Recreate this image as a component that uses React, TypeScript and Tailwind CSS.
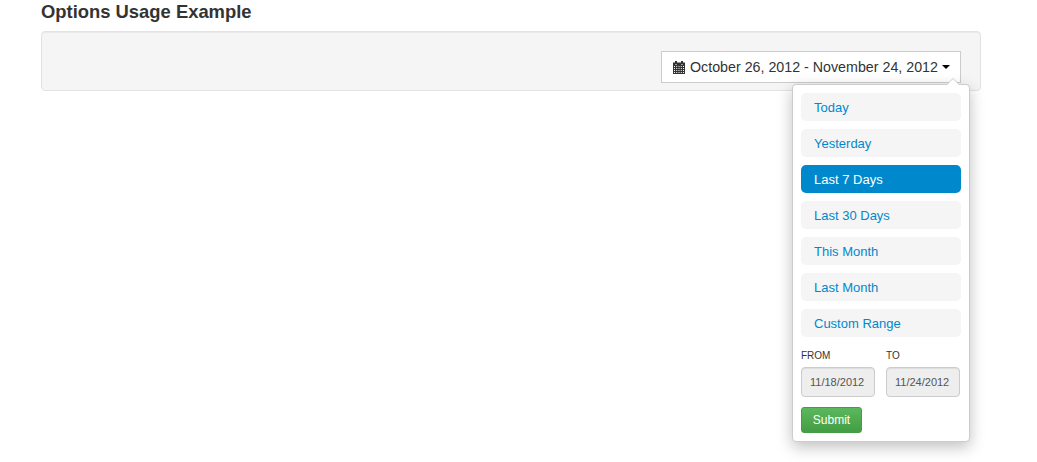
import React from 'react';

const ranges = ['Today', 'Yesterday', 'Last 7 Days', 'Last 30 Days', 'This Month', 'Last Month', 'Custom Range'];

const CalendarIcon = () => (
  <svg width="12" height="13" viewBox="0 0 12 13" className="shrink-0" fill="#333">
    <rect x="2" y="0" width="2" height="3" />
    <rect x="8" y="0" width="2" height="3" />
    <path d="M0 1.500h2v2h2v-2h4v2h2v-2h2V13H0z" />
    <g fill="#f5f5f5">
      {[5, 7, 9, 11].map((y) =>
        [1, 3.2, 5.5, 7.8, 10].map((x) => <rect key={`${x}-${y}`} x={x} y={y} width="1" height="1" />)
      )}
    </g>
  </svg>
);

const DateField = ({ label, value, className }: { label: string; value: string; className?: string }) => (
  <div className={className}>
    <div className="pt-px text-[10px] leading-[18px] text-[#333]">{label}</div>
    <div className="mt-[2px] flex h-[30px] w-[74px] items-center rounded-[4px] border border-[#ccc] bg-[#eee] pl-[8px] text-[11px] text-[#555] shadow-[inset_0_1px_1px_rgba(0,0,0,0.075)]">
      {value}
    </div>
  </div>
);

export default function App() {
  return (
    <div className="h-[462px] w-[1037px] overflow-hidden bg-white pl-[41px] font-['Liberation_Sans',Arial,sans-serif] text-[#333]">
      <h4 className="h-[31px] pt-px text-[18.4px] font-bold leading-[22px]">Options Usage Example</h4>
      <div className="relative flex h-[60px] w-[940px] justify-end rounded-[4px] border border-[#e3e3e3] bg-[#f5f5f5] pr-[19px] pt-[19px] shadow-[inset_0_1px_1px_rgba(0,0,0,0.05)]">
        <div className="flex h-[32px] w-[300px] items-center border border-[#ccc] bg-white pl-[11px] text-[14.25px] text-[#333]">
          <CalendarIcon />
          <span className="ml-[5px] whitespace-nowrap pt-[2px]">October 26, 2012 - November 24, 2012</span>
          <span className="ml-[4px] h-0 w-0 border-x-[4px] border-t-[4px] border-x-transparent border-t-black" />
        </div>

        <div className="absolute left-[750px] top-[52px] h-[358px] w-[178px] rounded-[4px] border border-[#ccc] bg-white pl-[8px] pt-[8px] shadow-[0_5px_15px_rgba(0,0,0,0.25)]">
          <span className="absolute right-[9px] top-[-7px] h-0 w-0 border-x-[7px] border-b-[7px] border-x-transparent border-b-[#ccc]" />
          <span className="absolute right-[10px] top-[-6px] h-0 w-0 border-x-[6px] border-b-[6px] border-x-transparent border-b-white" />
          <ul className="flex flex-col gap-[8px]">
            {ranges.map((range) => (
              <li
                key={range}
                className={
                  range === 'Last 7 Days'
                    ? 'flex h-[28px] w-[160px] items-center rounded-[5px] bg-[#08c] pl-[13px] pt-[2px] text-[13px] text-white'
                    : 'flex h-[28px] w-[160px] items-center rounded-[5px] bg-[#f5f5f5] pl-[13px] pt-[2px] text-[13px] text-[#08c]'
                }
              >
                {range}
              </li>
            ))}
          </ul>
          <div className="mt-[9px] flex">
            <DateField label="FROM" value="11/18/2012" />
            <DateField label="TO" value="11/24/2012" className="ml-[11px]" />
          </div>
          <div className="mt-[10px] flex h-[26px] w-[61px] items-center justify-center rounded-[3px] border border-[#449d44] bg-gradient-to-b from-[#5cb85c] to-[#449d44] text-[12px] text-white">
            Submit
          </div>
        </div>
      </div>
    </div>
  );
}
